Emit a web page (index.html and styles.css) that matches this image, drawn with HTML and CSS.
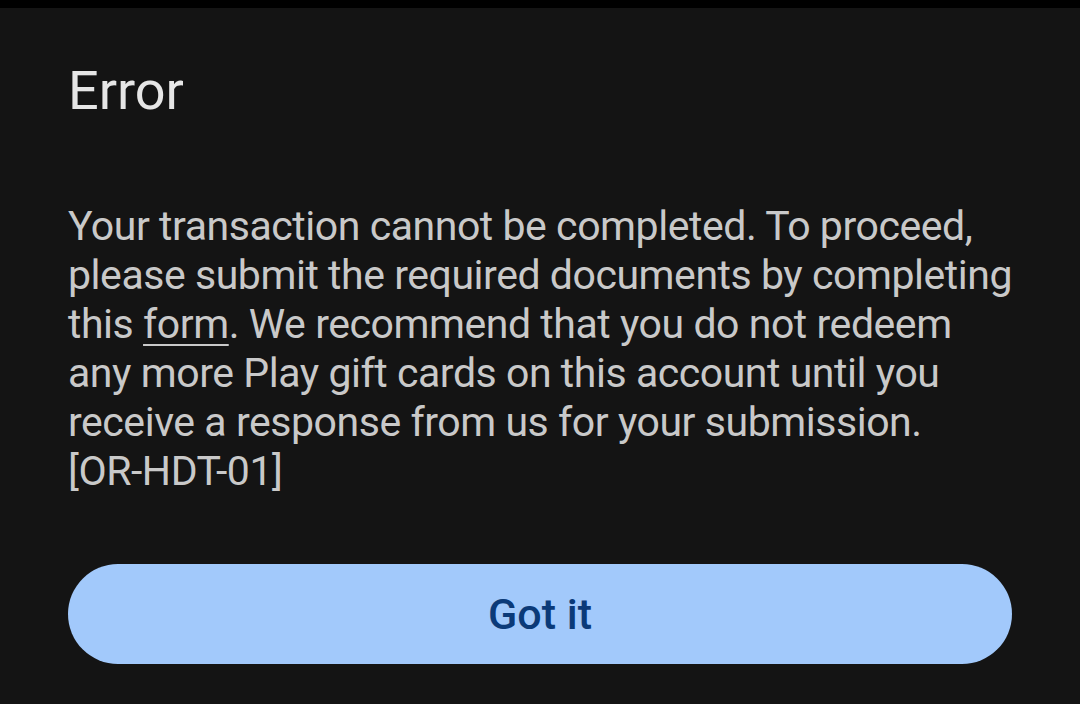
FILE: index.html
```html
<!DOCTYPE html>
<html lang="en">
<head>
    <meta charset="UTF-8">
    <meta name="viewport" content="width=device-width, initial-scale=1.0">
    <title>Error</title>
    <link rel="stylesheet" href="styles.css">
</head>
<body>
    <div class="status-bar"></div>
    <div class="dialog">
        <h1 class="dialog-title">Error</h1>
        <p class="dialog-message">
            Your transaction cannot be completed. To proceed,<br>
            please submit the required documents by completing<br>
            this <a href="#" class="dialog-link">form</a>. We recommend that you do not redeem<br>
            any more Play gift cards on this account until you<br>
            receive a response from us for your submission.<br>
            [OR-HDT-01]
        </p>
        <button type="button" class="btn-confirm">Got it</button>
    </div>
</body>
</html>
```

FILE: styles.css
```css
* {
    box-sizing: border-box;
}

body {
    margin: 0;
    height: 100vh;
    overflow: hidden;
    background-color: #141414;
    font-family: 'Roboto', 'Open Sans', sans-serif;
}

.status-bar {
    height: 8px;
    background-color: #000;
}

.dialog {
    padding: 0 68px;
}

.dialog-title {
    margin: 51px 0 0;
    font-size: 54px;
    font-weight: 400;
    line-height: 64px;
    color: #e6e6e6;
}

.dialog-message {
    margin: 79px 0 0;
    font-size: 41px;
    letter-spacing: -0.45px;
    line-height: 49px;
    white-space: nowrap;
    color: #c9c9c9;
}

.dialog-link {
    color: inherit;
    text-decoration: underline;
    text-underline-offset: 6px;
    text-decoration-thickness: 2px;
}

.btn-confirm {
    display: block;
    width: 100%;
    height: 100px;
    margin-top: 68px;
    border: none;
    border-radius: 50px;
    background-color: #a2c9fb;
    color: #0b3a78;
    font-family: inherit;
    font-size: 43px;
    font-weight: 500;
    cursor: pointer;
}
```
